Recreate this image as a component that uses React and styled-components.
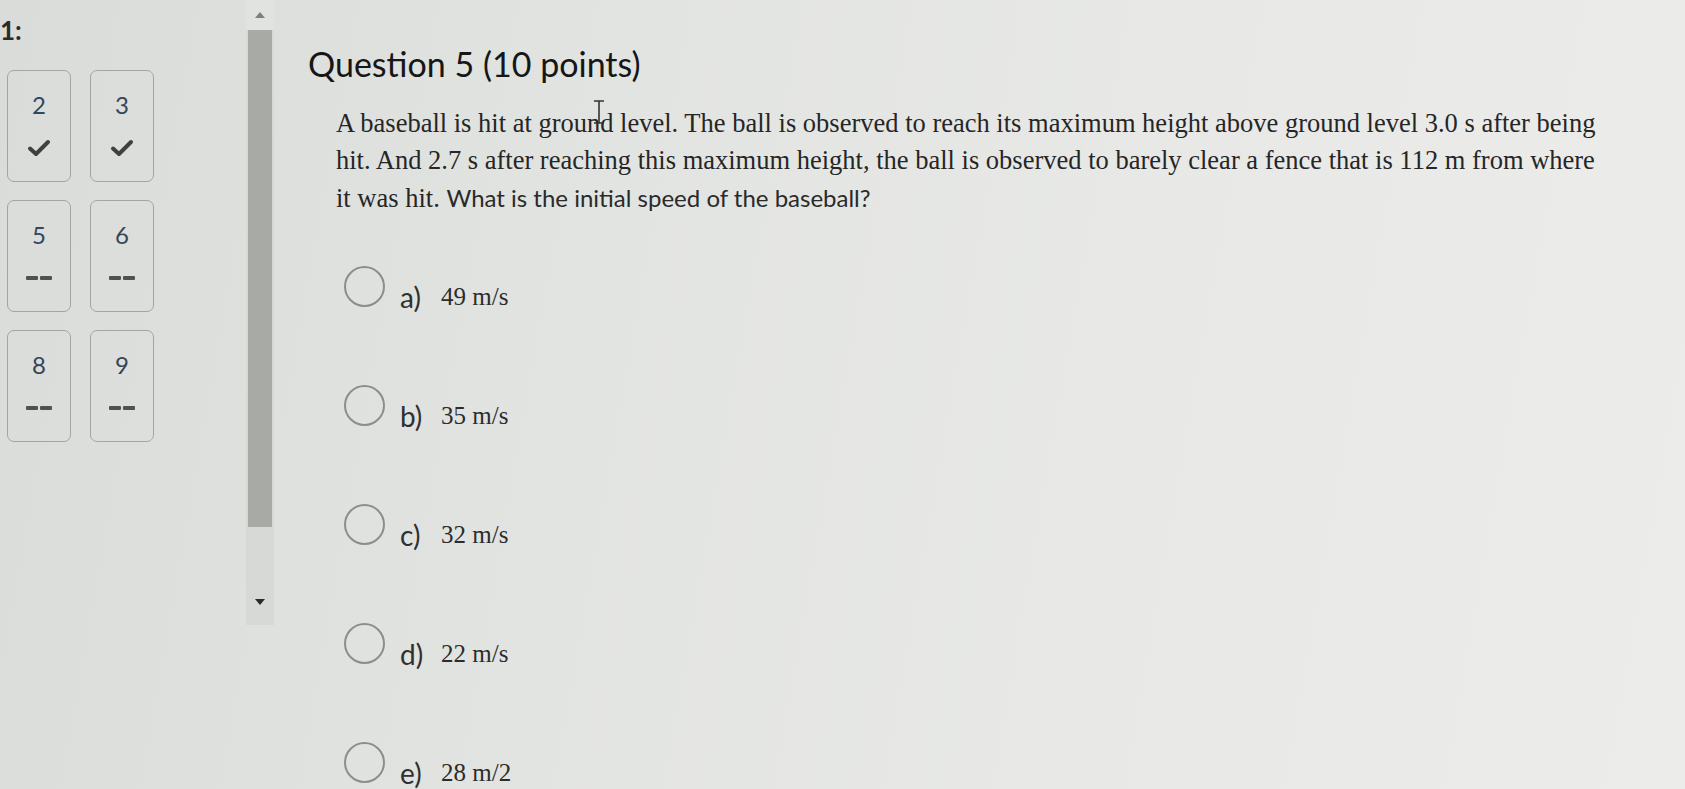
import React from "react";
import styled, { createGlobalStyle } from "styled-components";

const Global = createGlobalStyle`
  html, body {
    margin: 0;
    padding: 0;
    height: 100%;
  }
  body {
    background: linear-gradient(100deg, #dadcd9 0%, #e2e4e1 35%, #e8e9e7 65%, #ecedeb 100%);
    font-family: Lato, "Noto Sans", sans-serif;
    color: #222;
    overflow: hidden;
  }
`;

const Page = styled.div`
  position: relative;
  display: flex;
  width: 1685px;
  height: 789px;
`;

const Nav = styled.nav`
  width: 246px;
  flex: none;
  padding-top: 15px;
  box-sizing: border-box;
`;

const NavLabel = styled.div`
  font-family: Lato, sans-serif;
  font-size: 26px;
  font-weight: 700;
  line-height: 30px;
  color: #2b2b2b;
`;

const TileGrid = styled.div`
  display: grid;
  grid-template-columns: 64px 64px;
  column-gap: 19px;
  row-gap: 18px;
  margin: 25px 0 0 7px;
`;

const Tile = styled.div`
  height: 112px;
  box-sizing: border-box;
  border: 1.5px solid #a3a5a2;
  border-radius: 7px;
  display: flex;
  flex-direction: column;
  align-items: center;
  padding-top: 21px;
`;

const TileNum = styled.div`
  font-family: Lato, sans-serif;
  font-size: 24px;
  line-height: 26px;
  color: #34465a;
`;

const TileMark = styled.div`
  margin-top: 21px;
  height: 18px;
  display: flex;
  align-items: center;
  justify-content: center;
  gap: 2px;
`;

const Dash = styled.span`
  display: block;
  width: 12px;
  height: 4px;
  background: #505251;
  border-radius: 1px;
`;

const Check = () => (
  <svg width="24" height="18" viewBox="0 0 24 18">
    <path d="M3 9.5 L9 15 L21 3" fill="none" stroke="#404040" strokeWidth="4" strokeLinecap="round" strokeLinejoin="round" />
  </svg>
);

const Scroll = styled.div`
  width: 28px;
  height: 625px;
  flex: none;
  background: #d7d9d6;
  display: flex;
  flex-direction: column;
  align-items: center;
`;

const Arrow = styled.div`
  height: 30px;
  width: 100%;
  display: flex;
  align-items: center;
  justify-content: center;
  background: #e1e3e0;
`;

const Thumb = styled.div`
  width: 24px;
  height: 497px;
  background: #a8aaa6;
  flex: none;
`;

const Spacer = styled.div`
  flex: 1;
`;

const DownArrow = styled.div`
  height: 34px;
  display: flex;
  align-items: flex-start;
  justify-content: center;
  padding-top: 8px;
  box-sizing: border-box;
`;

const Main = styled.main`
  flex: 1;
  padding: 43px 0 0 34px;
  position: relative;
`;

const Title = styled.h1`
  margin: 0;
  font-family: Lato, sans-serif;
  font-weight: 400;
  font-size: 34px;
  line-height: 41px;
  color: #161616;
`;

const Prompt = styled.p`
  margin: 21px 0 0 28px;
  font-family: "Liberation Serif", "Times New Roman", serif;
  font-size: 26.5px;
  line-height: 37px;
  color: #262626;
  white-space: nowrap;
`;

const Sans = styled.span`
  font-family: Lato, sans-serif;
  font-size: 24px;
  color: #2a2a2a;
`;

const Options = styled.div`
  display: flex;
  flex-direction: column;
  gap: 78px;
  margin: 49px 0 0 36px;
`;

const Option = styled.label`
  display: flex;
  align-items: flex-end;
  height: 41px;
`;

const Radio = styled.span`
  width: 41px;
  height: 41px;
  box-sizing: border-box;
  border: 2px solid #8d8e8c;
  border-radius: 50%;
  flex: none;
`;

const Letter = styled.span`
  font-family: Lato, sans-serif;
  font-size: 28px;
  line-height: 28px;
  color: #303030;
  margin-left: 15px;
  margin-bottom: -4px;
  width: 41px;
`;

const Value = styled.span`
  font-family: "Liberation Serif", "Times New Roman", serif;
  font-size: 25px;
  line-height: 24px;
  color: #2c2c2c;
  margin-bottom: -2px;
`;

const Cursor = styled.svg`
  position: absolute;
  left: 318px;
  top: 100px;
`;

const tiles = [
  { n: 2, done: true },
  { n: 3, done: true },
  { n: 5 },
  { n: 6 },
  { n: 8 },
  { n: 9 },
];

const options = [
  ["a)", "49 m/s"],
  ["b)", "35 m/s"],
  ["c)", "32 m/s"],
  ["d)", "22 m/s"],
  ["e)", "28 m/2"],
];

export default function App() {
  return (
    <>
      <Global />
      <Page>
        <Nav>
          <NavLabel>1:</NavLabel>
          <TileGrid>
            {tiles.map((t) => (
              <Tile key={t.n}>
                <TileNum>{t.n}</TileNum>
                <TileMark>
                  {t.done ? (
                    <Check />
                  ) : (
                    <>
                      <Dash />
                      <Dash />
                    </>
                  )}
                </TileMark>
              </Tile>
            ))}
          </TileGrid>
        </Nav>
        <Scroll>
          <Arrow>
            <svg width="10" height="6" viewBox="0 0 10 6">
              <path d="M0 6 L5 0 L10 6 Z" fill="#7d7f7c" />
            </svg>
          </Arrow>
          <Thumb />
          <Spacer />
          <DownArrow>
            <svg width="10" height="6" viewBox="0 0 10 6">
              <path d="M0 0 L10 0 L5 6 Z" fill="#2a2a2a" />
            </svg>
          </DownArrow>
        </Scroll>
        <Main>
          <Title>Question 5 (10 points)</Title>
          <Prompt>
            A baseball is hit at ground level. The ball is observed to reach its maximum height above ground level 3.0 s after being
            <br />
            hit. And 2.7 s after reaching this maximum height, the ball is observed to barely clear a fence that is 112 m from where
            <br />
            it was hit. <Sans>What is the initial speed of the baseball?</Sans>
          </Prompt>
          <Options>
            {options.map(([l, v]) => (
              <Option key={l}>
                <Radio />
                <Letter>{l}</Letter>
                <Value>{v}</Value>
              </Option>
            ))}
          </Options>
          <Cursor width="14" height="24" viewBox="0 0 14 24">
            <path d="M2 1 H12 M7 1 V23 M2 23 H12" stroke="#333" strokeWidth="1.6" fill="none" />
          </Cursor>
        </Main>
      </Page>
    </>
  );
}
